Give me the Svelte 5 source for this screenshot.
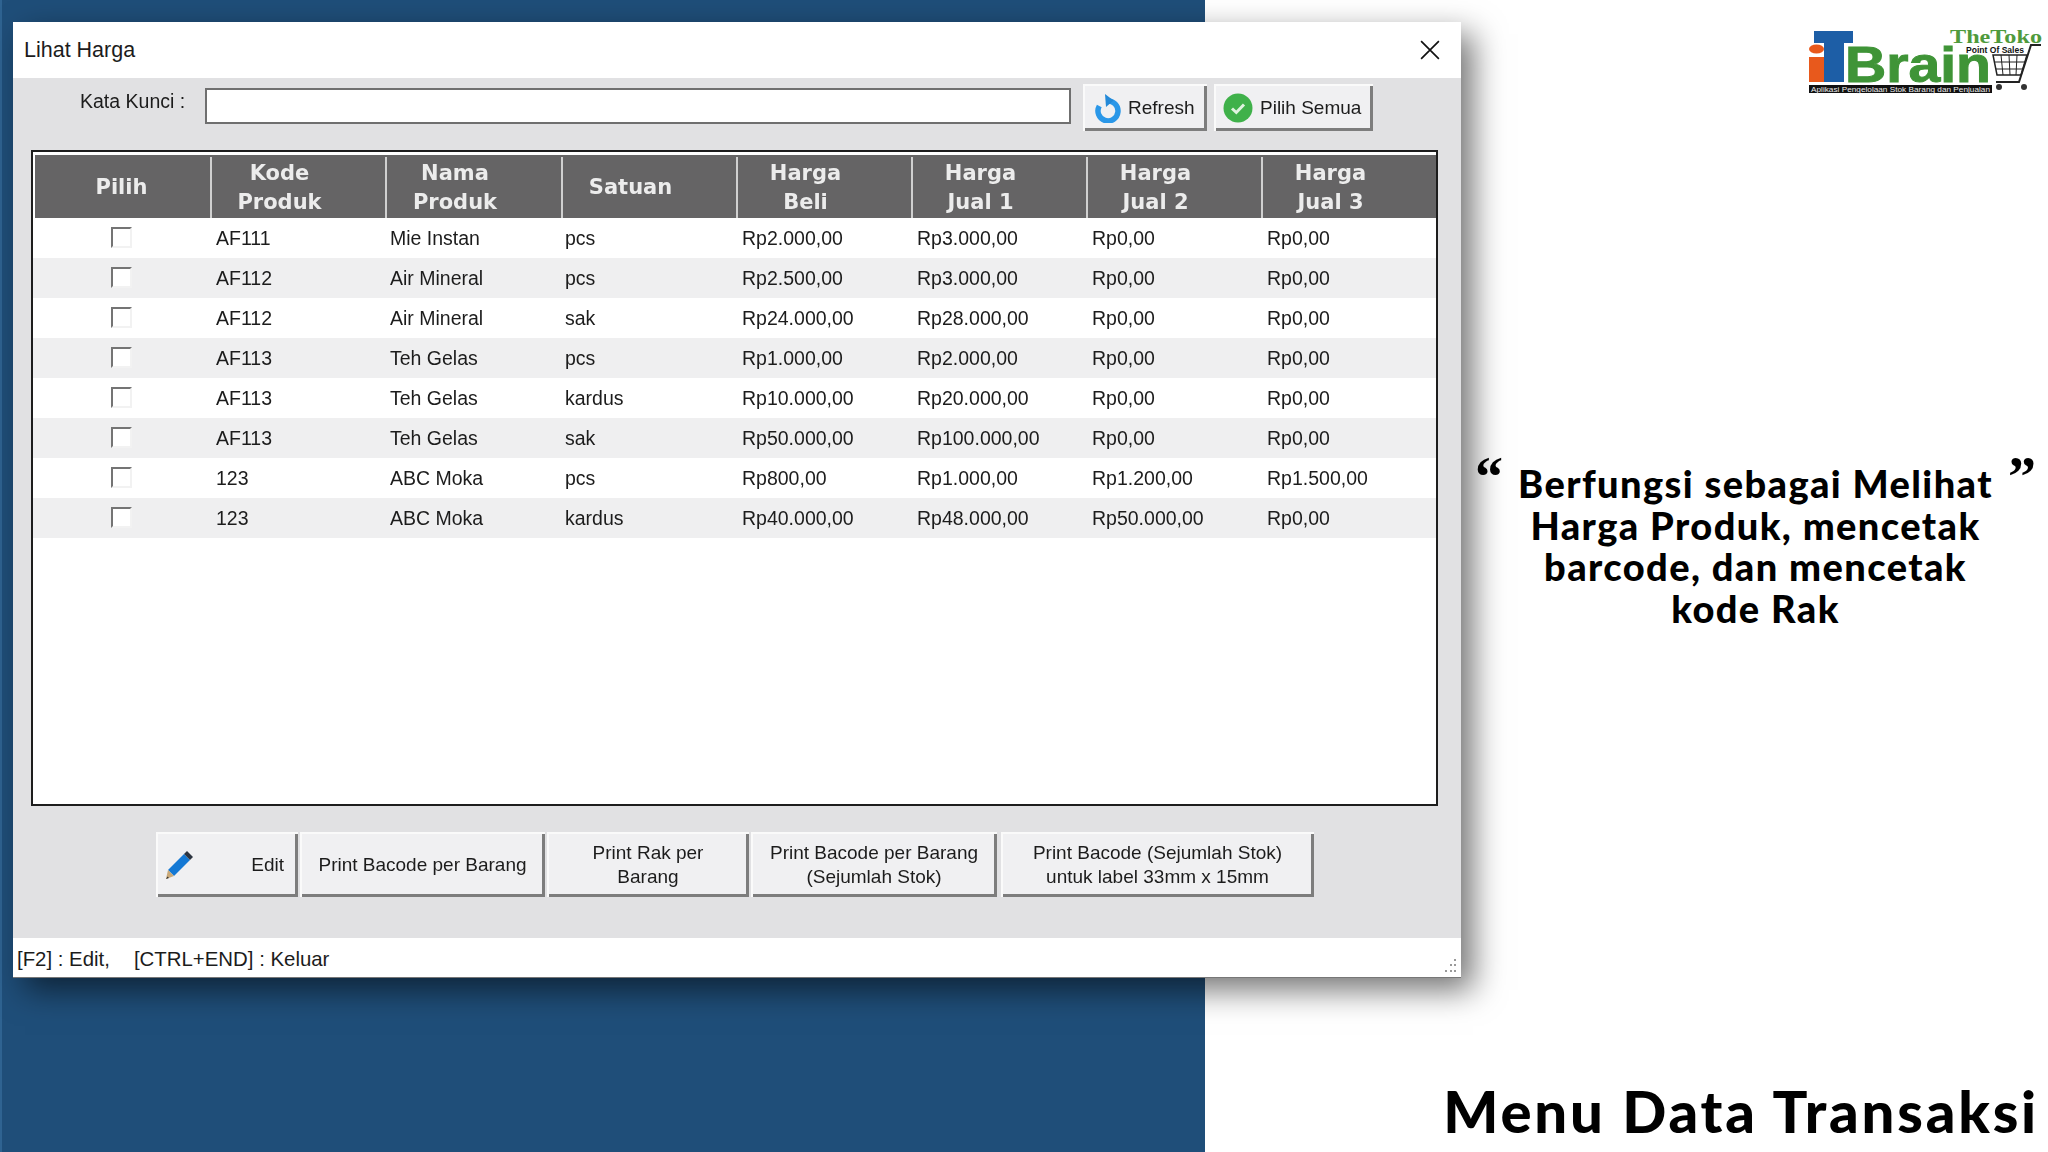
<script lang="ts">
const columns = [
  { label: 'Pilih' },
  { label: 'Kode', sub: 'Produk' },
  { label: 'Nama', sub: 'Produk' },
  { label: 'Satuan' },
  { label: 'Harga', sub: 'Beli' },
  { label: 'Harga', sub: 'Jual 1' },
  { label: 'Harga', sub: 'Jual 2' },
  { label: 'Harga', sub: 'Jual 3' },
];

const rows = [
  ['AF111', 'Mie Instan', 'pcs', 'Rp2.000,00', 'Rp3.000,00', 'Rp0,00', 'Rp0,00'],
  ['AF112', 'Air Mineral', 'pcs', 'Rp2.500,00', 'Rp3.000,00', 'Rp0,00', 'Rp0,00'],
  ['AF112', 'Air Mineral', 'sak', 'Rp24.000,00', 'Rp28.000,00', 'Rp0,00', 'Rp0,00'],
  ['AF113', 'Teh Gelas', 'pcs', 'Rp1.000,00', 'Rp2.000,00', 'Rp0,00', 'Rp0,00'],
  ['AF113', 'Teh Gelas', 'kardus', 'Rp10.000,00', 'Rp20.000,00', 'Rp0,00', 'Rp0,00'],
  ['AF113', 'Teh Gelas', 'sak', 'Rp50.000,00', 'Rp100.000,00', 'Rp0,00', 'Rp0,00'],
  ['123', 'ABC Moka', 'pcs', 'Rp800,00', 'Rp1.000,00', 'Rp1.200,00', 'Rp1.500,00'],
  ['123', 'ABC Moka', 'kardus', 'Rp40.000,00', 'Rp48.000,00', 'Rp50.000,00', 'Rp0,00'],
];
</script>

<div class="stage">
  <div class="desktop">
    <section class="window">
      <header class="titlebar">
        <span>Lihat Harga</span>
        <svg class="close" viewBox="0 0 18 18" aria-hidden="true">
          <path d="M1 1 17 17M17 1 1 17" stroke="#111" stroke-width="1.5" fill="none" />
        </svg>
      </header>

      <div class="body">
        <div class="search">
          <label class="search-label" for="kunci">Kata Kunci :</label>
          <input id="kunci" class="search-input" type="text" />
          <button type="button" class="btn refresh">
            <svg width="30" height="30" viewBox="0 0 30 30" aria-hidden="true">
              <path d="M14 8A10 10 0 1 1 6.3 13" stroke="#2a97e8" stroke-width="5.5" fill="none" />
              <path d="M12 1 20.5 7.5 13 14Z" fill="#2389d8" />
            </svg>
            Refresh
          </button>
          <button type="button" class="btn all">
            <svg width="30" height="30" viewBox="0 0 30 30" aria-hidden="true">
              <circle cx="15" cy="15" r="14.5" fill="#3fb14a" />
              <path d="M9 15.5 13.3 19.5 21 11.5" stroke="#dff3df" stroke-width="3" fill="none" />
            </svg>
            Pilih Semua
          </button>
        </div>

        <div class="grid">
          <div class="grid-head">
            {#each columns as col}
              <div class="head-cell">
                <span>{col.label}</span>
                {#if col.sub}<span>{col.sub}</span>{/if}
              </div>
            {/each}
          </div>
          {#each rows as row}
            <div class="grid-row">
              <div class="cell check"><span class="box"></span></div>
              {#each row as value}
                <div class="cell">{value}</div>
              {/each}
            </div>
          {/each}
        </div>

        <div class="actions">
          <button type="button" class="btn edit">
            <svg width="32" height="34" viewBox="0 0 32 34" aria-hidden="true">
              <path d="M21 6 27 12 11 28 5 22Z" fill="#1478d4" />
              <path d="M21 6 24 3 30 9 27 12Z" fill="#2c3440" />
              <path d="M5 22 11 28 3 31Z" fill="#c9a878" />
              <path d="M4.5 28.5 6 30 3 31Z" fill="#333" />
            </svg>
            <span>Edit</span>
          </button>
          <button type="button" class="btn bacode">Print Bacode per Barang</button>
          <button type="button" class="btn rak">Print Rak per<br />Barang</button>
          <button type="button" class="btn stok">Print Bacode per Barang<br />(Sejumlah Stok)</button>
          <button type="button" class="btn label">Print Bacode (Sejumlah Stok)<br />untuk label 33mm x 15mm</button>
        </div>
      </div>

      <footer class="status">
        <span>[F2] : Edit,</span>
        <span>[CTRL+END] : Keluar</span>
        <svg class="grip" width="16" height="16" viewBox="0 0 16 16" aria-hidden="true">
          <g fill="#9a9a9a">
            <rect x="12" y="1" width="2" height="2" />
            <rect x="8" y="6" width="2" height="2" />
            <rect x="12" y="6" width="2" height="2" />
            <rect x="3" y="12" width="2" height="2" />
            <rect x="8" y="12" width="2" height="2" />
            <rect x="12" y="12" width="2" height="2" />
          </g>
        </svg>
      </footer>
    </section>
  </div>

  <aside class="side">
    <svg class="logo" width="234" height="64" viewBox="0 0 234 64" aria-label="iTBrain TheToko">
      <text x="141" y="13" class="logo-toko" textLength="92" lengthAdjust="spacingAndGlyphs">TheToko</text>
      <text x="157" y="23" class="logo-pos" textLength="58" lengthAdjust="spacingAndGlyphs">Point Of Sales</text>
      <rect x="5" y="1" width="39" height="12" fill="#1d5ea6" />
      <rect x="15" y="1" width="20" height="51" fill="#1d5ea6" />
      <ellipse cx="7.5" cy="19" rx="7.5" ry="4.5" fill="#e8591c" />
      <rect x="0" y="27" width="15" height="25" fill="#e8591c" />
      <text x="36" y="52" class="logo-brain" textLength="146" lengthAdjust="spacingAndGlyphs">Brain</text>
      <rect x="0" y="55" width="183" height="8" fill="#111" />
      <text x="2" y="61.5" class="logo-tag" textLength="179" lengthAdjust="spacingAndGlyphs">Aplikasi Pengelolaan Stok Barang dan Penjualan</text>
      <g fill="none" stroke="#222">
        <path d="M232 15H222L210 52H187" stroke-width="2" />
        <path d="M184 25H218L212 45H188Z" stroke-width="1.5" />
        <path d="M192 25 194 45M200 25 201 45M208 25 207 45M185 32H216M187 39H214" stroke-width="1" />
      </g>
      <circle cx="190" cy="57" r="3" fill="#333" />
      <circle cx="215" cy="57" r="3" fill="#333" />
    </svg>

    <div class="quote">
      <span class="mark">“</span>
      <p class="quote-text">Berfungsi sebagai Melihat Harga Produk, mencetak barcode, dan mencetak kode Rak</p>
      <span class="mark">”</span>
    </div>

    <h1 class="menu-title">Menu Data Transaksi</h1>
  </aside>
</div>

<style>
  :global(body) {
    margin: 0;
    background: #fff;
  }

  .stage {
    display: flex;
    width: 2048px;
    height: 1152px;
    overflow: hidden;
    font-family: 'Liberation Sans', Arial, sans-serif;
  }

  .desktop {
    flex: 0 0 1205px;
    min-width: 0;
    box-sizing: border-box;
    padding: 22px 0 0 11px;
    background: #1f4e79;
    border-left: 2px solid #2f6391;
  }

  .window {
    position: relative;
    z-index: 1;
    display: flex;
    flex-direction: column;
    width: 1448px;
    height: 956px;
    background: #e1e1e3;
    color: #1c1c1c;
    box-shadow: 12px 12px 30px rgba(0, 0, 0, 0.55);
    filter: blur(0.4px);
  }

  .titlebar {
    display: flex;
    align-items: center;
    justify-content: space-between;
    height: 56px;
    padding: 0 21px 0 11px;
    background: #fff;
    font-size: 21.5px;
  }

  .close {
    width: 20px;
    height: 20px;
  }

  .body {
    flex: 1;
    display: flex;
    flex-direction: column;
    padding: 6px 23px 0 18px;
  }

  .search {
    display: flex;
    align-items: flex-start;
    height: 66px;
  }

  .search-label {
    width: 174px;
    padding: 5px 0 0 49px;
    box-sizing: border-box;
    font-size: 19.5px;
    line-height: 24px;
  }

  .search-input {
    box-sizing: border-box;
    width: 866px;
    height: 36px;
    margin: 4px 12px 0 0;
    padding: 0;
    border: 2px solid #6f6f6f;
    background: #fff;
  }

  .btn {
    box-sizing: border-box;
    padding: 0;
    border: 0;
    background: #f0f0f2;
    color: #1c1c1c;
    font-family: 'Liberation Sans', Arial, sans-serif;
    font-size: 19px;
    line-height: 24px;
    box-shadow:
      inset 2px 2px 0 #fafafa,
      inset -3px -3px 0 #7d7d7d;
  }

  .refresh,
  .all {
    display: flex;
    align-items: center;
    height: 47px;
  }

  .refresh {
    width: 124px;
    margin-right: 7px;
    gap: 5px;
    padding-left: 10px;
  }

  .all {
    width: 159px;
    gap: 7px;
    padding-left: 9px;
  }

  .grid {
    box-sizing: border-box;
    width: 1407px;
    height: 656px;
    border: 2px solid #1d1d1d;
    padding-top: 3px;
    background: #fff;
  }

  .grid-head,
  .grid-row {
    display: grid;
    grid-template-columns: 175px 175px 176px repeat(5, 175px);
  }

  .grid-head {
    height: 63px;
    margin-left: 2px;
    background: #656465;
    color: #ececec;
    font-family: 'DejaVu Sans', Verdana, sans-serif;
    font-weight: 700;
    font-size: 21px;
    line-height: 29px;
  }

  .head-cell {
    display: flex;
    flex-direction: column;
    align-items: center;
    justify-content: center;
    padding-right: 38px;
    border-left: 2px solid #d0d0d0;
    margin-top: 2px;
  }

  .head-cell:first-child {
    padding-right: 2px;
    border-left: 0;
  }

  .grid-row {
    height: 40px;
    padding-left: 2px;
    font-size: 19.5px;
  }

  .grid-row:nth-child(odd) {
    background: #efeff0;
  }

  .cell {
    display: flex;
    align-items: center;
    padding-left: 6px;
  }

  .cell:nth-child(3) {
    padding-left: 5px;
  }

  .cell:nth-child(4) {
    padding-left: 4px;
  }

  .check {
    justify-content: center;
    padding: 0 3px 2px 0;
  }

  .box {
    box-sizing: border-box;
    width: 21px;
    height: 21px;
    background: #fff;
    border: 2px solid #f2f2f2;
    border-top-color: #747474;
    border-left-color: #747474;
  }

  .actions {
    display: flex;
    align-items: flex-start;
    gap: 2px;
    height: 131px;
    padding: 26px 0 0 125px;
    box-sizing: border-box;
  }

  .actions .btn {
    height: 65px;
    text-align: center;
  }

  .edit {
    display: flex;
    align-items: center;
    justify-content: space-between;
    width: 142px;
    padding: 0 14px 0 7px;
  }

  .bacode {
    width: 245px;
  }

  .rak {
    width: 202px;
  }

  .stok {
    width: 246px;
  }

  .label {
    width: 313px;
    margin-left: 2px;
  }

  .status {
    position: relative;
    display: flex;
    align-items: center;
    gap: 24px;
    height: 40px;
    padding: 3px 0 0 4px;
    background: #fff;
    font-size: 20.4px;
    border-bottom: 1px solid #777;
    box-sizing: border-box;
  }

  .grip {
    position: absolute;
    right: 3px;
    bottom: 3px;
  }

  .side {
    flex: 1;
    min-width: 0;
    display: flex;
    flex-direction: column;
    padding-left: 256px;
    color: #000;
    font-family: Lato, 'Noto Sans', sans-serif;
  }

  .logo {
    align-self: flex-end;
    margin: 30px 5px 0 0;
  }

  .logo-toko {
    font-family: 'Liberation Serif', serif;
    font-weight: 700;
    font-size: 19px;
    fill: #4f9a3c;
  }

  .logo-pos {
    font-family: 'Liberation Sans', sans-serif;
    font-weight: 700;
    font-size: 8.5px;
    fill: #111;
  }

  .logo-brain {
    font-family: 'Liberation Sans', sans-serif;
    font-weight: 700;
    font-size: 50px;
    fill: #3f9437;
    stroke: #3f9437;
    stroke-width: 1;
  }

  .logo-tag {
    font-family: 'Liberation Sans', sans-serif;
    font-size: 7px;
    fill: #eee;
  }

  .quote {
    display: flex;
    align-items: flex-start;
    justify-content: space-between;
    margin: 358px 12px 0 14px;
  }

  .mark {
    font-family: 'Liberation Serif', serif;
    font-weight: 700;
    font-size: 56px;
    line-height: 50px;
    height: 50px;
  }

  .quote-text {
    width: 484px;
    margin: 11px 0 0;
    text-align: center;
    font-weight: 900;
    font-size: 38px;
    letter-spacing: 1.4px;
    line-height: 41.5px;
  }

  .menu-title {
    margin: auto 9px 0 0;
    padding-bottom: 6px;
    align-self: flex-end;
    font-weight: 900;
    font-size: 58px;
    letter-spacing: 2.8px;
    line-height: 70px;
    white-space: nowrap;
  }
</style>
